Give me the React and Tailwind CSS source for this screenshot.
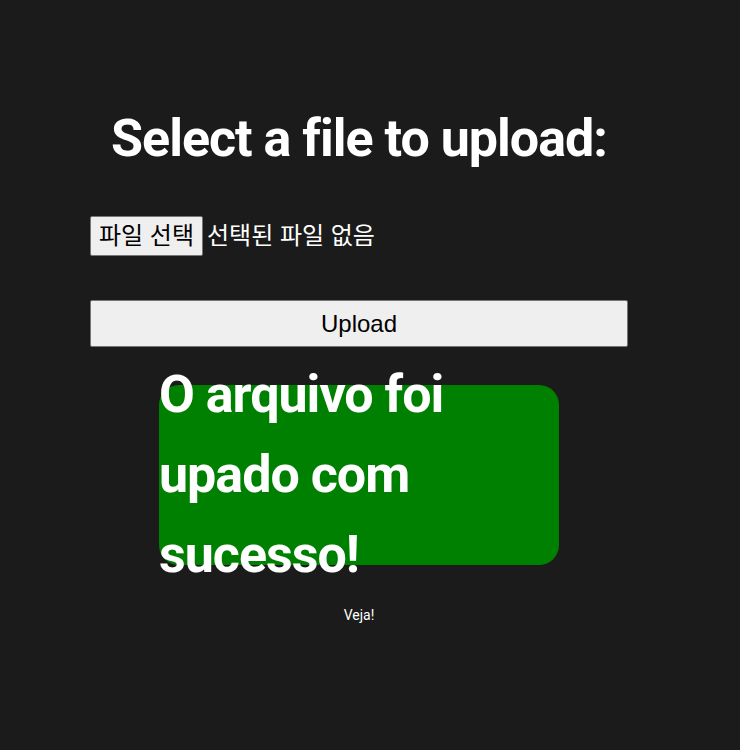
import React from 'react';

const title = { fontFamily: 'Roboto, "Noto Sans", sans-serif' };
const ui = { fontFamily: '"Liberation Sans", "Noto Sans CJK KR", sans-serif' };

export default function App() {
    return (
        <div className="min-h-[750px] w-full bg-[#1b1b1b] text-white">
            <div className="w-[538px] ml-[90px] pt-[103px]">
                <h1 style={title} className="whitespace-nowrap text-center text-[52px] font-bold leading-[72px] tracking-[-1px] text-white">
                    Select a file to upload:
                </h1>

                <div style={ui} className="mt-[41px] flex items-center text-[24px]">
                    <button className="h-[40px] px-[8px] bg-[#efefef] text-black border border-[#767676] rounded-[2px]">
                        파일 선택
                    </button>
                    <span className="ml-[4px] text-white">선택된 파일 없음</span>
                </div>

                <button style={ui} className="mt-[44px] w-full h-[47px] bg-[#efefef] text-black text-[24px] border border-[#767676] rounded-[2px]">
                    Upload
                </button>
            </div>

            <div className="ml-[159px] mt-[38px] w-[400px] h-[180px] rounded-[20px] bg-[#008000] flex items-center">
                <p style={title} className="text-[52px] font-bold leading-[80px] tracking-[-1px] text-white">
                    O arquivo foi upado com sucesso!
                </p>
            </div>

            <p style={title} className="mt-[40px] w-[538px] ml-[90px] text-center text-[14px] text-white">
                Veja!
            </p>
        </div>
    );
}
